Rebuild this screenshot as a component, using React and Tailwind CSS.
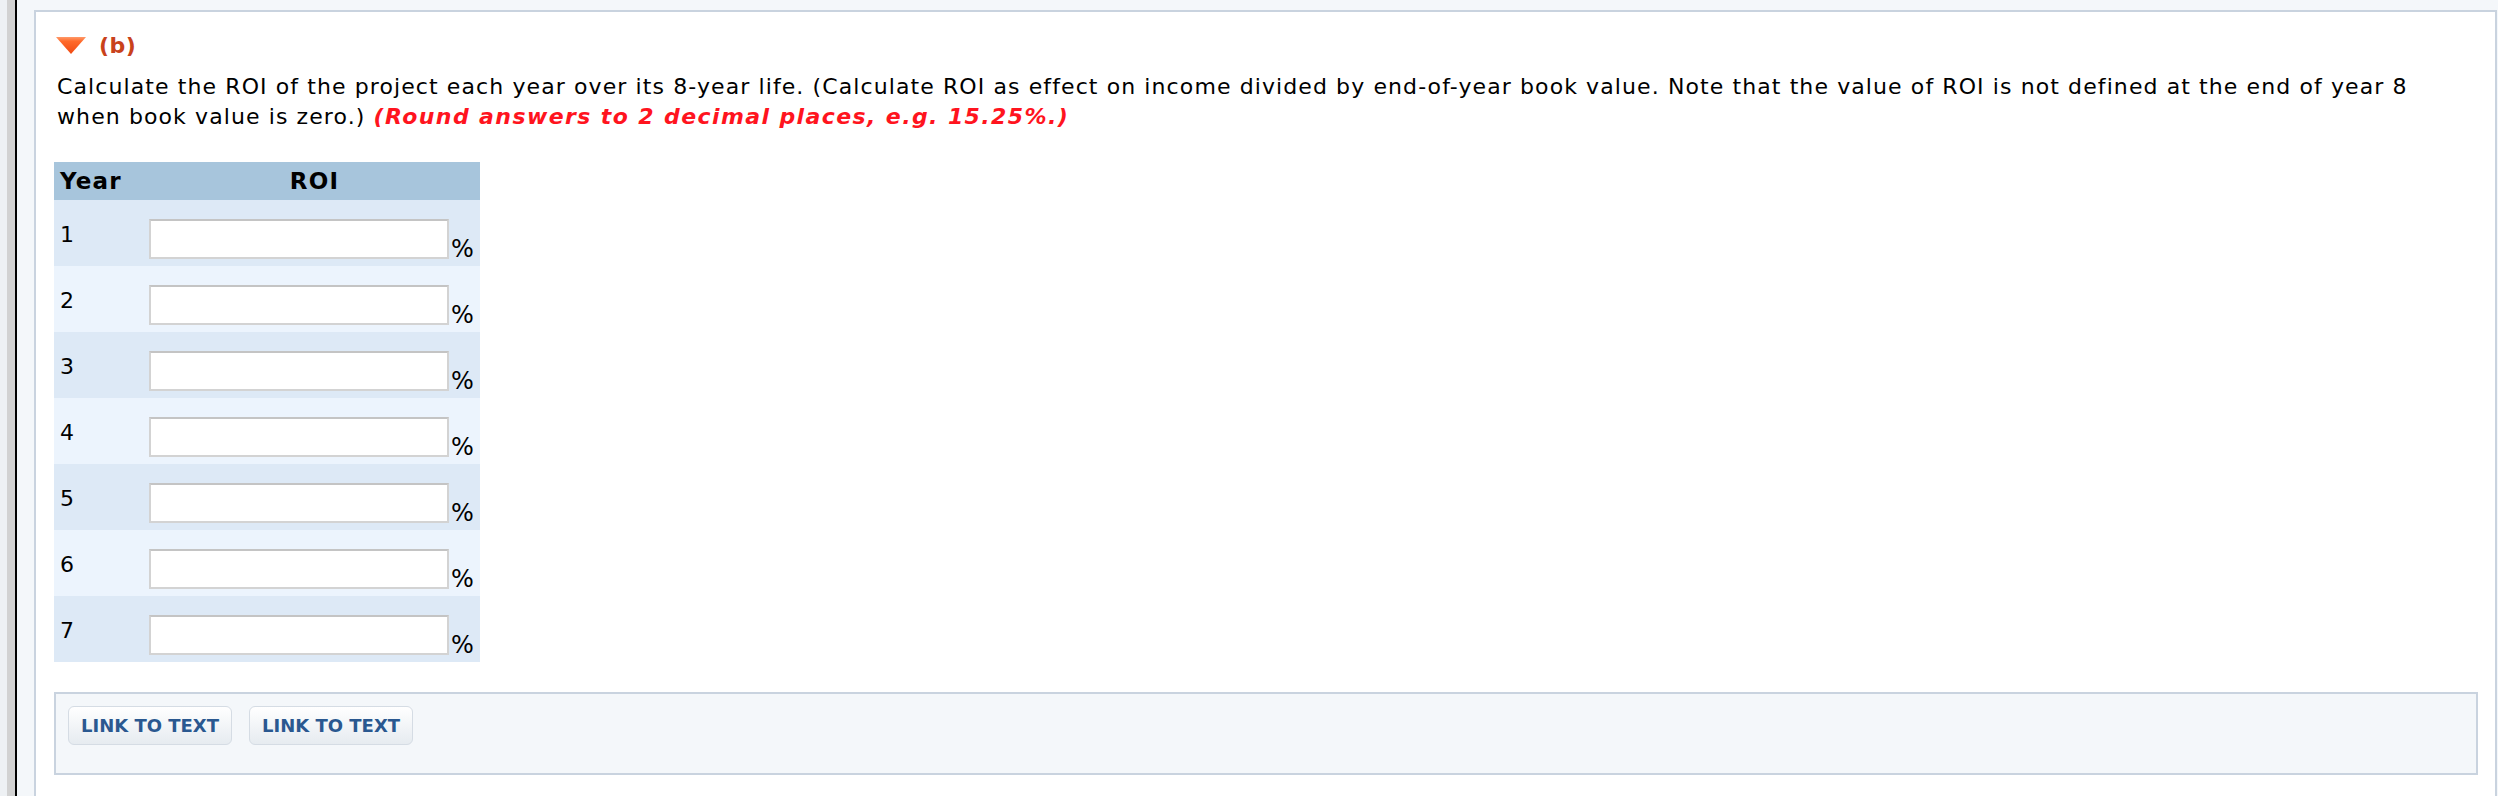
import React from "react";

const rows = [1, 2, 3, 4, 5, 6, 7];

function Triangle() {
  return (
    <svg width="30" height="17" viewBox="0 0 30 17" className="block">
      <defs>
        <linearGradient id="tg" x1="0" y1="0" x2="0" y2="1">
          <stop offset="0" stopColor="#ff9a6a" />
          <stop offset="0.25" stopColor="#ff6a2a" />
          <stop offset="1" stopColor="#f04a12" />
        </linearGradient>
      </defs>
      <polygon points="0,0 30,0 15,17" fill="url(#tg)" />
    </svg>
  );
}

export default function App() {
  return (
    <div
      className="flex w-[2498px] h-[796px] overflow-hidden bg-[#f4f7fa] text-black"
      style={{ fontFamily: '"DejaVu Sans", Verdana, sans-serif' }}
    >
      <div className="w-[7px] shrink-0 bg-[#eef1f4]" />
      <div className="w-[8px] shrink-0 bg-[#d2d2d2]" />
      <div className="w-[2px] shrink-0 bg-black" />
      <div className="flex-1 pl-[17px] pt-[10px] pr-[1px]">
        <div className="h-full bg-white border-2 border-b-0 border-[#c9d3df] pl-[18px] pr-[17px]">
          <div className="flex items-center h-[37px] mt-[15px] pl-[2px]">
            <Triangle />
            <span className="ml-[13px] text-[22px] font-bold text-[#c9421b] leading-[26px] tracking-[0.5px]">
              (b)
            </span>
          </div>
          <p className="mt-[8px] pl-[3px] text-[22px] leading-[30px] tracking-[1.1px]">
            Calculate the ROI of the project each year over its 8-year life. (Calculate ROI as effect on income divided by end-of-year book value. Note that the value of ROI is not defined at the end of year 8
            <br />
            when book value is zero.){" "}
            <span className="font-bold italic text-[#ff141e] tracking-[1.4px]">
              (Round answers to 2 decimal places, e.g. 15.25%.)
            </span>
          </p>

          <div className="mt-[30px] w-[426px]">
            <div className="flex h-[38px] items-center bg-[#a7c5dc] font-bold text-[23px] tracking-[1.2px]">
              <div className="w-[95px] pl-[6px]">Year</div>
              <div className="flex-1 text-center">ROI</div>
            </div>
            {rows.map((r) => (
              <div
                key={r}
                className={
                  "flex h-[66px] items-start text-[22px] " +
                  (r % 2 === 1 ? "bg-[#dde9f6]" : "bg-[#ecf4fd]")
                }
              >
                <div className="w-[95px] pl-[6px] pt-[22px] leading-[26px]">{r}</div>
                <div className="flex items-end pt-[19px]">
                  <input
                    type="text"
                    className="w-[300px] h-[40px] bg-white border-2 border-[#d3d3d3] border-t-[#c4c4c4] outline-none"
                  />
                  <span className="ml-[2px] text-[24px] leading-[22px] mb-[-1px]">%</span>
                </div>
              </div>
            ))}
          </div>

          <div className="mt-[30px] h-[83px] border-2 border-[#c9d3df] bg-[#f4f7fa] pl-[12px] pt-[12px] flex items-start gap-[17px]">
            {["LINK TO TEXT", "LINK TO TEXT"].map((t, i) => (
              <button
                key={i}
                className="h-[39px] px-[12px] rounded-[6px] border border-[#d5dce4] bg-gradient-to-b from-white to-[#e6ebf0] text-[18px] font-bold text-[#2a5890] leading-none"
              >
                {t}
              </button>
            ))}
          </div>
        </div>
      </div>
    </div>
  );
}
